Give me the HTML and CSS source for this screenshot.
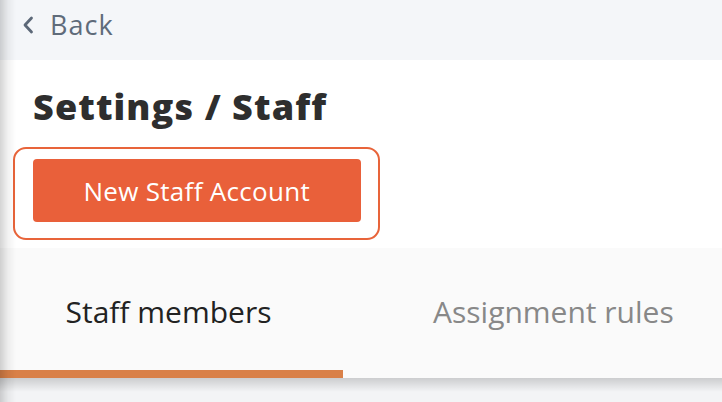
FILE: index.html
```html
<!DOCTYPE html>
<html>
<head>
<meta charset="utf-8">
<link rel="stylesheet" href="styles.css">
</head>
<body>
<div class="edge-shadow"></div>
<div class="topbar">
  <a class="back">
    <svg class="chev" width="14" height="22" viewBox="0 0 14 22"><path d="M10.5 4 L4 11 L10.5 18" fill="none" stroke="#5c6878" stroke-width="2.8" stroke-linecap="round" stroke-linejoin="round"/></svg>
    <span>Back</span>
  </a>
</div>
<div class="header">
  <h1 class="title">Settings / Staff</h1>
  <div class="focus-ring">
    <button class="primary">New Staff Account</button>
  </div>
</div>
<div class="tabs">
  <div class="tab active">Staff members</div>
  <div class="tab">Assignment rules</div>
</div>
<div class="content"></div>
</body>
</html>
```
FILE: styles.css
```css
html, body {
  margin: 0;
  padding: 0;
  height: 100%;
  overflow: hidden;
  background: #f3f4f6;
  font-family: "Open Sans", "Noto Sans", sans-serif;
}
.edge-shadow {
  position: fixed;
  left: 0;
  top: 0;
  bottom: 0;
  width: 16px;
  background: linear-gradient(to right, rgba(0,0,0,0.17), rgba(0,0,0,0.05) 50%, rgba(0,0,0,0));
  pointer-events: none;
  z-index: 10;
}
.topbar {
  height: 60px;
  background: #f4f6f9;
  display: flex;
  align-items: flex-start;
  padding: 6px 0 0 21px;
  box-sizing: border-box;
}
.back {
  display: flex;
  align-items: center;
  gap: 15px;
  color: #5f6b7a;
  font-size: 27px;
  font-weight: 500;
  letter-spacing: 1px;
}
.header {
  background: #fff;
  padding: 24px 0 8px 13px;
  height: 188px;
  box-sizing: border-box;
}
.title {
  margin: 0 0 0 20px;
  font-size: 36px;
  font-weight: 800;
  color: #2e2e2e;
  line-height: 46px;
  letter-spacing: 1.1px;
}
.focus-ring {
  margin-top: 17px;
  width: 367px;
  height: 93px;
  box-sizing: border-box;
  border: 2.5px solid #e8643a;
  border-radius: 13px;
  padding: 10px 17px 15px 17.5px;
}
.primary {
  display: block;
  width: 100%;
  height: 63px;
  border: none;
  border-radius: 4px;
  background: #e9603a;
  color: #fff;
  font-family: "Open Sans", sans-serif;
  font-size: 26px;
  font-weight: 500;
  letter-spacing: 0.3px;
  padding: 0;
}
.tabs {
  display: flex;
  height: 130px;
  background: #fafafa;
  position: relative;
}
.tabs::after {
  content: "";
  position: absolute;
  left: 0;
  right: 0;
  top: 100%;
  height: 14px;
  background: linear-gradient(to bottom, rgba(0,0,0,0.16), rgba(0,0,0,0));
}
.tab {
  flex: 0 0 auto;
  display: flex;
  align-items: center;
  justify-content: center;
  box-sizing: border-box;
  padding-top: 4px;
  font-size: 30px;
  font-weight: 500;
  color: #888;
}
.tab.active {
  width: 343px;
  color: #222;
  border-bottom: 8px solid #d98048;
  padding-bottom: 0;
  padding-right: 6px;
}
.tab:not(.active) {
  flex: 1 1 auto;
  min-width: 0;
  padding-bottom: 8px;
  padding-left: 90px;
  justify-content: flex-start;
  white-space: nowrap;
}
.content {
  height: 40px;
}
```
